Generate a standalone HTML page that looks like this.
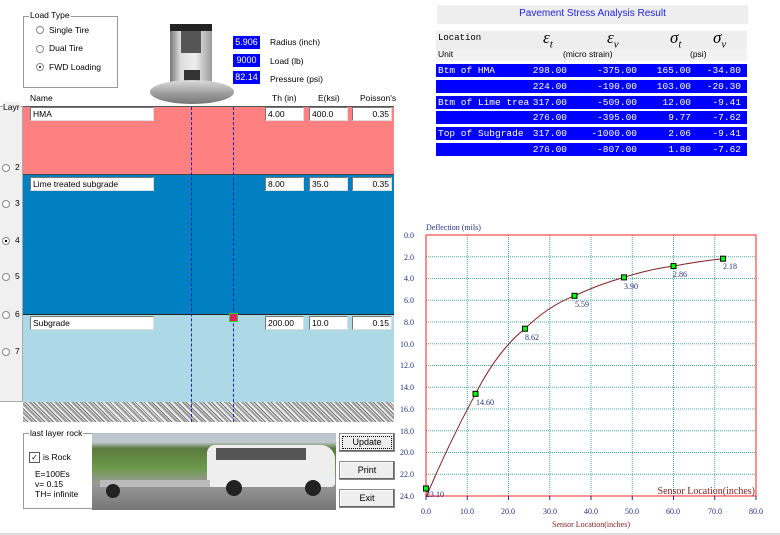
<!DOCTYPE html><html><head><style>
body{margin:0;width:780px;height:535px;background:#fff;position:relative;overflow:hidden;font-family:"Liberation Sans",sans-serif;font-size:8.5px;color:#000}
.a{position:absolute}
.in{position:absolute;background:#fff;border-top:1px solid #777;border-left:1px solid #777;border-bottom:1px solid #ddd;border-right:1px solid #ddd;line-height:12px;font-size:8.5px;padding:0 2px;box-sizing:border-box;height:14px}
.blu{position:absolute;background:#0000ff;color:#fff;font-size:9px;text-align:center;width:27px;height:13px;line-height:13px}
.rad{position:absolute;width:8px;height:8px;border:1px solid #888;border-radius:50%;background:#fff;box-sizing:border-box}
.row{position:absolute;left:436px;width:311px;height:13px;background:#0000ff;color:#fff;font-family:"Liberation Mono",monospace;font-size:9.5px;line-height:13px}
.row span{position:absolute;text-align:right}
.btn{position:absolute;background:#eee;border:1px solid #888;box-shadow:inset -1px -1px #666,inset 1px 1px #fff;text-align:center;font-size:9px}
</style></head><body>
<div class="a" style="left:23px;top:16px;width:93px;height:70px;border:1px solid #999"></div>
<div class="a" style="left:29px;top:10px;background:#fff;padding:0 1px">Load Type</div>
<div class="rad" style="left:36px;top:26px"></div><div class="a" style="left:49px;top:25px">Single Tire</div>
<div class="rad" style="left:36px;top:45px"></div><div class="a" style="left:49px;top:43px">Dual Tire</div>
<div class="rad" style="left:36px;top:63px"><div style="margin:2px;width:2px;height:2px;background:#000;border-radius:50%"></div></div><div class="a" style="left:49px;top:62px">FWD Loading</div>
<div class="a" style="left:170px;top:24px;width:42px;height:62px;background:linear-gradient(90deg,#777,#ddd 25%,#eee 60%,#999);"></div>
<div class="a" style="left:170px;top:24px;width:42px;height:7px;background:#222"></div>
<div class="a" style="left:181px;top:31px;width:20px;height:22px;background:#555"></div>
<div class="a" style="left:184px;top:70px;width:16px;height:14px;background:#333"></div>
<div class="a" style="left:150px;top:80px;width:84px;height:24px;border-radius:50%;background:linear-gradient(#ddd,#999 60%,#777)"></div>
<div class="blu" style="left:233px;top:36px">5.906</div><div class="a" style="left:270px;top:37px">Radius (inch)</div>
<div class="blu" style="left:233px;top:54px">9000</div><div class="a" style="left:270px;top:56px">Load (lb)</div>
<div class="blu" style="left:233px;top:71px">82.14</div><div class="a" style="left:270px;top:74px">Pressure (psi)</div>
<div class="a" style="left:30px;top:93px">Name</div>
<div class="a" style="left:272px;top:93px">Th (in)</div>
<div class="a" style="left:318px;top:93px">E(ksi)</div>
<div class="a" style="left:360px;top:93px">Poisson's</div>
<div class="a" style="left:0;top:106px;width:22px;height:294px;background:#f0f0f0;border:1px solid #aaa;border-left:none"></div>
<div class="a" style="left:3px;top:102px;background:#f0f0f0">Layr</div>
<div class="rad" style="left:2px;top:164px"></div><div class="a" style="left:15px;top:162px">2</div>
<div class="rad" style="left:2px;top:200px"></div><div class="a" style="left:15px;top:198px">3</div>
<div class="rad" style="left:2px;top:237px"><div style="margin:2px;width:2px;height:2px;background:#000"></div></div><div class="a" style="left:15px;top:235px">4</div>
<div class="rad" style="left:2px;top:273px"></div><div class="a" style="left:15px;top:271px">5</div>
<div class="rad" style="left:2px;top:311px"></div><div class="a" style="left:15px;top:309px">6</div>
<div class="rad" style="left:2px;top:348px"></div><div class="a" style="left:15px;top:346px">7</div>
<div class="a" style="left:23px;top:106px;width:371px;height:68px;background:#ff8080;border-top:1px solid #555"></div>
<div class="a" style="left:23px;top:174px;width:371px;height:140px;background:#0080c0;border-top:1px solid #444"></div>
<div class="a" style="left:23px;top:314px;width:371px;height:88px;background:#add8e6;border-top:1px solid #222"></div>
<div class="a" style="left:23px;top:402px;width:371px;height:20px;background:repeating-linear-gradient(45deg,#999 0 2px,#ddd 2px 3px,#777 3px 4px,#eee 4px 6px)"></div>
<div class="a" style="left:191px;top:107px;height:315px;border-left:1px dashed #2020c0"></div>
<div class="a" style="left:233px;top:107px;height:315px;border-left:1px dashed #2020c0"></div>
<div class="a" style="left:229px;top:313px;width:7px;height:7px;background:#e02060;border:1px solid #3c3"></div>
<div class="in" style="left:30px;top:107px;width:124px">HMA</div>
<div class="in" style="left:265px;top:107px;width:39px">4.00</div>
<div class="in" style="left:309px;top:107px;width:39px">400.0</div>
<div class="in" style="left:352px;top:107px;width:40px;text-align:right">0.35</div>
<div class="in" style="left:30px;top:177px;width:124px">Lime treated subgrade</div>
<div class="in" style="left:265px;top:177px;width:39px">8.00</div>
<div class="in" style="left:309px;top:177px;width:39px">35.0</div>
<div class="in" style="left:352px;top:177px;width:40px;text-align:right">0.35</div>
<div class="in" style="left:30px;top:316px;width:124px">Subgrade</div>
<div class="in" style="left:265px;top:316px;width:39px">200.00</div>
<div class="in" style="left:309px;top:316px;width:39px">10.0</div>
<div class="in" style="left:352px;top:316px;width:40px;text-align:right">0.15</div>
<div class="a" style="left:23px;top:433px;width:68px;height:74px;border:1px solid #999"></div>
<div class="a" style="left:29px;top:428px;background:#fff;padding:0 1px">last layer rock</div>
<div class="a" style="left:29px;top:452px;width:9px;height:9px;border:1px solid #555;font-size:8px;line-height:9px;text-align:center">✓</div>
<div class="a" style="left:43px;top:452px">is Rock</div>
<div class="a" style="left:35px;top:469px;line-height:10px">E=100Es<br>v= 0.15<br>TH= infinite</div>
<div class="a" style="left:92px;top:433px;width:244px;height:77px;background:linear-gradient(#b8c4cc 0,#c0c8cc 12%,#5a7a40 20%,#6c9a48 45%,#999 65%,#777 100%)"></div>
<div class="a" style="left:207px;top:445px;width:128px;height:42px;background:#eee;border-radius:8px 14px 4px 4px"></div>
<div class="a" style="left:216px;top:448px;width:90px;height:12px;background:#555"></div>
<div class="a" style="left:226px;top:480px;width:16px;height:16px;border-radius:50%;background:#222"></div>
<div class="a" style="left:305px;top:480px;width:16px;height:16px;border-radius:50%;background:#222"></div>
<div class="a" style="left:100px;top:480px;width:110px;height:7px;background:#bbb"></div>
<div class="a" style="left:106px;top:484px;width:14px;height:14px;border-radius:50%;background:#222"></div>
<div class="btn" style="left:339px;top:433px;width:54px;height:17px;line-height:17px;outline:1px dotted #000;outline-offset:-4px">Update</div>
<div class="btn" style="left:339px;top:461px;width:54px;height:17px;line-height:17px">Print</div>
<div class="btn" style="left:339px;top:489px;width:54px;height:17px;line-height:17px">Exit</div>
<div class="a" style="left:0;top:533px;width:780px;height:2px;background:#ddd"></div>
<div class="a" style="left:437px;top:5px;width:311px;height:19px;background:#eee;color:#2020e0;font-size:10px;text-align:center;line-height:18px">Pavement Stress Analysis Result</div>
<div class="a" style="left:436px;top:31px;width:311px;height:18px;background:#eee"></div>
<div class="a" style="left:438px;top:33px;font-family:'Liberation Mono',monospace;font-size:9px">Location</div>
<div class="a" style="left:543px;top:28px;font-family:'Liberation Serif',serif;font-style:italic;font-size:17px">ε<sub style="font-size:11px">t</sub></div>
<div class="a" style="left:607px;top:28px;font-family:'Liberation Serif',serif;font-style:italic;font-size:17px">ε<sub style="font-size:11px">v</sub></div>
<div class="a" style="left:670px;top:28px;font-family:'Liberation Serif',serif;font-style:italic;font-size:17px">σ<sub style="font-size:11px">t</sub></div>
<div class="a" style="left:713px;top:28px;font-family:'Liberation Serif',serif;font-style:italic;font-size:17px">σ<sub style="font-size:11px">v</sub></div>
<div class="a" style="left:436px;top:49px;width:311px;height:12px;background:#f2f2f2"></div>
<div class="a" style="left:438px;top:49px;font-size:8.5px">Unit</div>
<div class="a" style="left:563px;top:49px;font-size:8.5px">(micro strain)</div>
<div class="a" style="left:690px;top:49px;font-size:8.5px">(psi)</div>
<div class="row" style="top:64px"><span style="left:2px">Btm of HMA</span><span style="right:180px">298.00</span><span style="right:110px">-375.00</span><span style="right:56px">165.00</span><span style="right:6px">-34.80</span></div>
<div class="row" style="top:80px"><span style="right:180px">224.00</span><span style="right:110px">-190.00</span><span style="right:56px">103.00</span><span style="right:6px">-20.30</span></div>
<div class="row" style="top:96px"><span style="left:2px">Btm of Lime trea</span><span style="right:180px">317.00</span><span style="right:110px">-509.00</span><span style="right:56px">12.00</span><span style="right:6px">-9.41</span></div>
<div class="row" style="top:111px"><span style="right:180px">276.00</span><span style="right:110px">-395.00</span><span style="right:56px">9.77</span><span style="right:6px">-7.62</span></div>
<div class="row" style="top:127px"><span style="left:2px">Top of Subgrade</span><span style="right:180px">317.00</span><span style="right:110px">-1000.00</span><span style="right:56px">2.06</span><span style="right:6px">-9.41</span></div>
<div class="row" style="top:143px"><span style="right:180px">276.00</span><span style="right:110px">-807.00</span><span style="right:56px">1.80</span><span style="right:6px">-7.62</span></div>
<svg class="a" style="left:400px;top:215px" width="380" height="320" font-family="Liberation Serif,serif" font-size="8" fill="#203080">
<g transform="translate(-400,-215)">
<g stroke="#50a8a8" stroke-dasharray="1,1" stroke-width="1">
<path d="M426 256.75H756M426 278.5H756M426 300.25H756M426 322H756M426 343.75H756M426 365.5H756M426 387.25H756M426 409H756M426 430.75H756M426 452.5H756M426 474.25H756"/>
<path d="M467.25 235V496M508.5 235V496M549.75 235V496M591 235V496M632.25 235V496M673.5 235V496M714.75 235V496"/>
</g>
<rect x="426" y="235" width="330" height="261" fill="none" stroke="#ff2020"/>
<path d="M426 496V500M467.25 496V500M508.5 496V500M549.75 496V500M591 496V500M632.25 496V500M673.5 496V500M714.75 496V500M756 496V500" stroke="#203080"/>
<path d="M426.5 496 Q448 445 475.5 393.8 Q498 350 525 328.7 Q548 306 574.5 295.8 Q600 284 624 277.4 Q650 269 673.5 266.1 Q700 261 723 258.7" fill="none" stroke="#802020"/>
<g fill="#00ff00" stroke="#000"><rect x="423.5" y="486" width="5" height="5"/><rect x="473" y="391.3" width="5" height="5"/><rect x="522.5" y="326.2" width="5" height="5"/><rect x="572" y="293.3" width="5" height="5"/><rect x="621.5" y="274.9" width="5" height="5"/><rect x="671" y="263.6" width="5" height="5"/><rect x="720.5" y="256.2" width="5" height="5"/></g>
<g><text x="426" y="497">23.10</text><text x="476" y="405">14.60</text><text x="525" y="340">8.62</text><text x="575" y="307">5.59</text><text x="624" y="289">3.90</text><text x="673" y="277">2.86</text><text x="723" y="269">2.18</text></g>
<text x="426" y="230">Deflection (mils)</text>
<g text-anchor="end"><text x="414" y="238">0.0</text><text x="414" y="260">2.0</text><text x="414" y="281">4.0</text><text x="414" y="303">6.0</text><text x="414" y="325">8.0</text><text x="414" y="347">10.0</text><text x="414" y="368">12.0</text><text x="414" y="390">14.0</text><text x="414" y="412">16.0</text><text x="414" y="434">18.0</text><text x="414" y="455">20.0</text><text x="414" y="477">22.0</text><text x="414" y="499">24.0</text></g>
<g text-anchor="middle"><text x="426" y="514">0.0</text><text x="467" y="514">10.0</text><text x="508" y="514">20.0</text><text x="550" y="514">30.0</text><text x="591" y="514">40.0</text><text x="632" y="514">50.0</text><text x="673" y="514">60.0</text><text x="715" y="514">70.0</text><text x="756" y="514">80.0</text></g>
<text x="591" y="527" text-anchor="middle" fill="#802020">Sensor Location(inches)</text>
<text x="755" y="494" text-anchor="end" fill="#802020" font-size="10">Sensor Location(inches)</text>
</g></svg>
</body></html>
